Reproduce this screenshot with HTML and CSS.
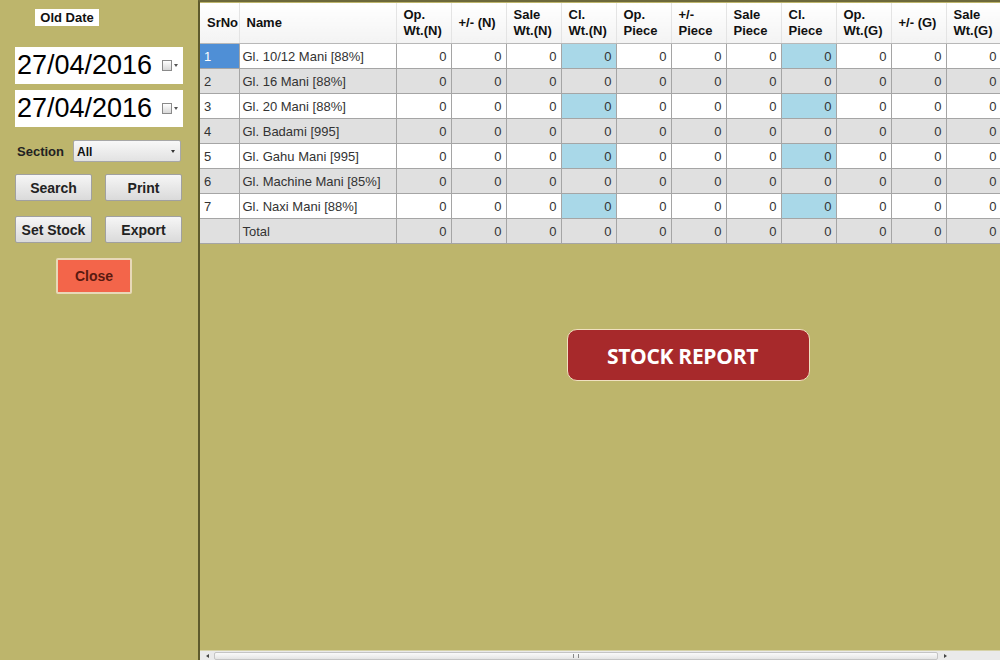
FILE: index.html
```html
<!DOCTYPE html>
<html lang="en">
<head>
    <meta charset="UTF-8">
    <title>Stock Report</title>
    <link rel="stylesheet" href="styles.css">
</head>
<body>
<div class="app">
    <!-- left filter panel -->
    <div class="side">
        <div class="old-date">Old Date</div>
        <div class="date-box first">
            <span class="date-text">27/04/2016</span>
            <span class="cal-icon"><span class="cal-sq"></span><span class="cal-arrow"></span></span>
        </div>
        <div class="date-box">
            <span class="date-text">27/04/2016</span>
            <span class="cal-icon"><span class="cal-sq"></span><span class="cal-arrow"></span></span>
        </div>
        <div class="section-row">
            <span class="section-label">Section</span>
            <div class="select">All<span class="select-arrow"></span></div>
        </div>
        <div class="btn-row">
            <button class="btn">Search</button>
            <button class="btn">Print</button>
        </div>
        <div class="btn-row">
            <button class="btn">Set Stock</button>
            <button class="btn">Export</button>
        </div>
        <div class="close-row">
            <button class="btn close-btn">Close</button>
        </div>
    </div>

    <!-- grid panel -->
    <div class="grid-panel">
        <div class="grid-wrap">
            <table class="grid">
                <colgroup>
                    <col class="c-sr"><col class="c-name">
                    <col class="c-num"><col class="c-num"><col class="c-num"><col class="c-num">
                    <col class="c-num"><col class="c-num"><col class="c-num"><col class="c-num">
                    <col class="c-num"><col class="c-num"><col class="c-num">
                </colgroup>
                <thead>
                <tr>
                    <th>SrNo</th>
                    <th>Name</th>
                    <th>Op.<br>Wt.(N)</th>
                    <th>+/- (N)</th>
                    <th>Sale<br>Wt.(N)</th>
                    <th>Cl.<br>Wt.(N)</th>
                    <th>Op.<br>Piece</th>
                    <th>+/-<br>Piece</th>
                    <th>Sale<br>Piece</th>
                    <th>Cl.<br>Piece</th>
                    <th>Op.<br>Wt.(G)</th>
                    <th>+/- (G)</th>
                    <th>Sale<br>Wt.(G)</th>
                </tr>
                </thead>
                <tbody id="gridBody"></tbody>
            </table>
        </div>

        <div class="title-area">
            <div class="report-title">STOCK REPORT</div>
        </div>

        <div class="hscroll">
            <span class="arrow left"></span>
            <span class="thumb"><span class="grip"></span></span>
            <span class="arrow right"></span>
        </div>
    </div>
</div>

<script>
    // rows of the stock grid
    const items = [
        "Gl. 10/12 Mani [88%]", "Gl. 16 Mani [88%]", "Gl. 20 Mani [88%]",
        "Gl. Badami [995]", "Gl. Gahu Mani [995]", "Gl. Machine Mani [85%]",
        "Gl. Naxi Mani [88%]"
    ];
    const body = document.getElementById('gridBody');
    const numCols = 11;
    const closingCols = [3, 7]; // Cl. Wt.(N), Cl. Piece

    function addRow(sr, name, cls) {
        const tr = document.createElement('tr');
        if (cls) tr.className = cls;
        let html = `<td class="sr">${sr}</td><td class="name">${name}</td>`;
        for (let i = 0; i < numCols; i++) {
            const cl = closingCols.includes(i) ? ' cl' : '';
            html += `<td class="num${cl}">0</td>`;
        }
        tr.innerHTML = html;
        body.appendChild(tr);
    }

    items.forEach((name, i) => addRow(i + 1, name, i % 2 ? 'alt' : 'odd'));
    addRow('', 'Total', 'alt total');
    body.querySelector('td.sr').classList.add('current');
</script>
</body>
</html>
```

FILE: styles.css
```css
/* base */
html, body {
    margin: 0;
    padding: 0;
    height: 100%;
}
body {
    font-family: "Liberation Sans", Arial, sans-serif;
    background-color: #bdb56c;
    overflow: hidden;
}
.app {
    display: flex;
    height: 660px;
}

/* left panel */
.side {
    width: 198px;
    flex-shrink: 0;
    padding-top: 9px;
    box-sizing: border-box;
}
.old-date {
    margin-left: 35px;
    width: 64px;
    height: 17px;
    line-height: 17px;
    background-color: #fff;
    font-size: 13px;
    font-weight: bold;
    text-align: center;
    color: #111;
}
.date-box {
    display: flex;
    align-items: center;
    margin: 6px 0 0 15px;
    width: 168px;
    height: 37px;
    background-color: #fff;
    box-sizing: border-box;
}
.date-box.first {
    margin-top: 21px;
}
.date-text {
    font-size: 27px;
    color: #000;
    margin-left: 2px;
    width: 145px;
}
.cal-icon {
    display: flex;
    align-items: center;
    gap: 2px;
}
.cal-sq {
    width: 8px;
    height: 9px;
    border: 1px solid #8a8a8a;
    background: linear-gradient(#fff, #d8d8d8);
}
.cal-arrow {
    width: 0;
    height: 0;
    border-left: 2px solid transparent;
    border-right: 2px solid transparent;
    border-top: 3px solid #555;
}
.section-row {
    display: flex;
    align-items: center;
    margin: 13px 0 0 17px;
}
.section-label {
    font-size: 13px;
    font-weight: bold;
    color: #222;
    width: 56px;
}
.select {
    position: relative;
    width: 108px;
    height: 22px;
    line-height: 22px;
    box-sizing: border-box;
    border: 1px solid #a7a7a7;
    border-radius: 2px;
    background: linear-gradient(#f8f8f8, #e2e2e2);
    font-size: 12px;
    font-weight: bold;
    padding-left: 3px;
    color: #111;
}
.select-arrow {
    position: absolute;
    right: 5px;
    top: 9px;
    border-left: 2px solid transparent;
    border-right: 2px solid transparent;
    border-top: 3px solid #333;
}
.btn-row {
    display: flex;
    gap: 13px;
    margin: 12px 0 0 15px;
}
.btn-row + .btn-row {
    margin-top: 15px;
}
.btn {
    width: 77px;
    height: 27px;
    border: 1px solid #a0a0a0;
    border-radius: 2px;
    background: linear-gradient(#f6f6f6 0%, #e8e8e8 50%, #dadada 100%);
    font-family: "Liberation Sans", Arial, sans-serif;
    font-size: 14px;
    font-weight: bold;
    color: #222;
    padding: 0;
}
.close-row {
    margin: 15px 0 0 56px;
}
.close-btn {
    width: 76px;
    height: 36px;
    background: #f3654a;
    border: 2px solid #e8d8b8;
    font-size: 14px;
    color: #5a1a10;
}

/* grid panel */
.grid-panel {
    flex: 1;
    display: flex;
    flex-direction: column;
    border-left: 2px solid #5e5a2c;
    border-top: 2px solid #6c683a;
    overflow: hidden;
    min-width: 0;
}
.grid-wrap {
    overflow: hidden;
    padding-top: 1px;
    background-color: #bdb56c;
}
.grid {
    border-collapse: collapse;
    table-layout: fixed;
    width: 801px;
    font-size: 13px;
}
.c-sr { width: 39px; }
.c-name { width: 157px; }
.c-num { width: 55px; }
.grid th {
    height: 40px;
    padding: 0 0 0 7px;
    text-align: left;
    font-weight: bold;
    font-size: 13px;
    line-height: 16px;
    color: #111;
    background: linear-gradient(#ffffff, #f3f3f3);
    border-right: 1px solid #e4e4e4;
    border-bottom: 1px solid #b8b8b8;
    white-space: nowrap;
}
.grid td {
    height: 24px;
    padding: 0 4px;
    border: 1px solid #a5a5a5;
    color: #333;
    white-space: nowrap;
    overflow: hidden;
}
.grid td:first-child { border-left: none; }
.grid tr.odd td { background-color: #fff; }
.grid tr.alt td { background-color: #e0e0e0; }
.grid td.sr { padding-left: 4px; }
.grid td.name { padding-left: 3px; }
.grid td.num { text-align: right; padding-right: 4px; }
.grid tr.odd td.cl { background-color: #a9d8e8; }
.grid td.current {
    background-color: #4f8fd6 !important;
    color: #fff;
}

/* report title */
.title-area {
    flex: 1;
    padding: 85px 0 0 367px;
}
.report-title {
    width: 243px;
    height: 52px;
    line-height: 52px;
    box-sizing: border-box;
    border: 1px solid #f0e0c0;
    border-radius: 10px;
    padding-right: 12px;
    background-color: #a7292b;
    color: #fff;
    font-family: "Open Sans", "Liberation Sans", sans-serif;
    font-weight: bold;
    font-size: 21px;
    text-align: center;
    letter-spacing: -0.3px;
}

/* horizontal scrollbar */
.hscroll {
    display: flex;
    align-items: center;
    height: 9px;
    margin-bottom: 0;
    background-color: #eaeaea;
    border-top: 1px solid #d6d2a8;
}
.arrow {
    width: 14px;
    display: flex;
    justify-content: center;
}
.arrow.left::before {
    content: "";
    border-top: 2px solid transparent;
    border-bottom: 2px solid transparent;
    border-right: 3px solid #444;
}
.arrow.right::before {
    content: "";
    border-top: 2px solid transparent;
    border-bottom: 2px solid transparent;
    border-left: 3px solid #444;
}
.thumb {
    width: 724px;
    height: 8px;
    background: linear-gradient(#fafafa, #e4e4e4);
    border: 1px solid #c4c4c4;
    border-radius: 2px;
    box-sizing: border-box;
    display: flex;
    justify-content: center;
    align-items: center;
}
.grip {
    width: 6px;
    height: 4px;
    border-left: 1px solid #888;
    border-right: 1px solid #888;
    box-sizing: border-box;
}
```
